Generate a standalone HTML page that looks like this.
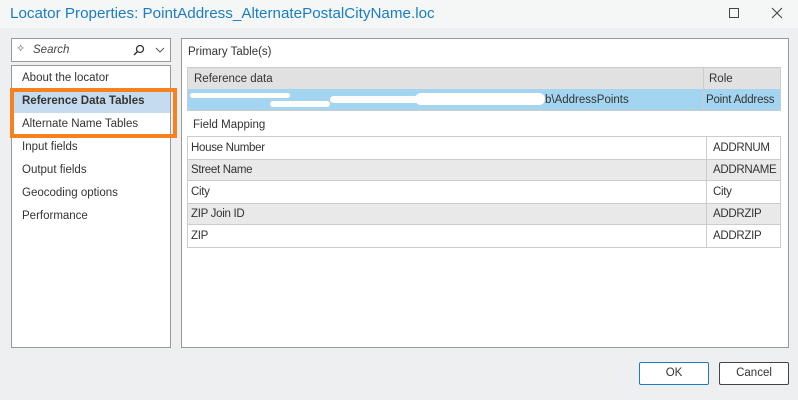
<!DOCTYPE html>
<html><head><style>
*{box-sizing:border-box;margin:0;padding:0}
body{width:798px;height:400px;overflow:hidden;background:#eeeff1;font-family:"Liberation Sans",sans-serif;font-size:11.5px;color:#333;position:relative}
.abs{position:absolute}
.title{left:0;top:0;width:798px;height:28px;background:#f5f7f7}
.title span{position:absolute;left:10px;top:5px;font-size:15.2px;color:#1a7dc4}
.cell{position:absolute;white-space:nowrap}
</style></head><body>
<div class="abs title"><span>Locator Properties: PointAddress_AlternatePostalCityName.loc</span>
<div class="abs" style="left:729px;top:8px;width:10px;height:10px;border:1px solid #444"></div>
<svg class="abs" style="left:771px;top:7px" width="12" height="12"><path d="M1 1L11 11M11 1L1 11" stroke="#444" stroke-width="1.1"/></svg>
</div>
<div class="abs" style="left:11px;top:38px;width:160px;height:24px;background:#fff;border:1px solid #999">
<span class="abs" style="left:4px;top:3px;font-size:11px;color:#666">✧</span>
<span class="abs" style="left:21px;top:5px;font-style:italic;color:#444">Search</span>
<svg class="abs" style="left:121px;top:5px" width="12" height="12"><circle cx="7" cy="5" r="3.5" fill="none" stroke="#333" stroke-width="1.3"/><path d="M4.5 7.5L1 11" stroke="#333" stroke-width="1.5"/></svg>
<svg class="abs" style="left:143px;top:8px" width="10" height="6"><path d="M1 1L5 5L9 1" fill="none" stroke="#555"/></svg>
</div>
<div class="abs" style="left:11px;top:65px;width:160px;height:283px;background:#fff;border:1px solid #999"></div>
<div class="abs" style="left:12px;top:91px;width:158px;height:22px;background:#c5dcf0"></div>
<div class="cell" style="left:22px;top:72px">About the locator</div>
<div class="cell" style="left:22px;top:95px;font-weight:bold">Reference Data Tables</div>
<div class="cell" style="left:22px;top:118px">Alternate Name Tables</div>
<div class="cell" style="left:22px;top:141px">Input fields</div>
<div class="cell" style="left:22px;top:164px">Output fields</div>
<div class="cell" style="left:22px;top:187px">Geocoding options</div>
<div class="cell" style="left:22px;top:210px">Performance</div>
<div class="abs" style="left:10px;top:88px;width:167px;height:50px;border:4px solid #f5821f"></div>
<div class="abs" style="left:181px;top:38px;width:608px;height:310px;background:#fff;border:1px solid #999"></div>
<div class="cell" style="left:188px;top:46px">Primary Table(s)</div>
<div class="abs" style="left:187px;top:67px;width:594px;height:44px;border:1px solid #ccc;background:#e1e1e1"></div>
<div class="abs" style="left:188px;top:89px;width:592px;height:21px;background:#a3d5f0"></div>
<div class="abs" style="left:703px;top:68px;width:1px;height:42px;background:#ccc"></div>
<div class="abs" style="left:190px;top:93px;width:100px;height:5px;background:#fff;border-radius:3px"></div>
<div class="abs" style="left:270px;top:101px;width:60px;height:6px;background:#fff;border-radius:3px"></div>
<div class="abs" style="left:330px;top:96px;width:200px;height:7px;background:#fff;border-radius:4px"></div>
<div class="abs" style="left:415px;top:93px;width:130px;height:12px;background:#fff;border-radius:6px"></div>
<div class="cell" style="left:194px;top:73px">Reference data</div>
<div class="cell" style="left:709px;top:73px">Role</div>
<div class="cell" style="left:545px;top:94px">b\AddressPoints</div>
<div class="cell" style="left:706px;top:94px;letter-spacing:-0.2px">Point Address</div>
<div class="cell" style="left:193px;top:119px">Field Mapping</div>
<div class="abs" style="left:187px;top:136px;width:594px;height:112px;border:1px solid #ccc;background:#fff"></div>
<div class="abs" style="left:188px;top:159px;width:592px;height:22px;background:#e9e9e9;border-top:1px solid #ccc;border-bottom:1px solid #ccc"></div>
<div class="abs" style="left:188px;top:203px;width:592px;height:22px;background:#e9e9e9;border-top:1px solid #ccc;border-bottom:1px solid #ccc"></div>
<div class="abs" style="left:706px;top:137px;width:1px;height:110px;background:#ccc"></div>
<div style="letter-spacing:-0.3px">
<div class="cell" style="left:191px;top:142px">House Number</div><div class="cell" style="left:713px;top:142px">ADDRNUM</div>
<div class="cell" style="left:191px;top:164px">Street Name</div><div class="cell" style="left:713px;top:164px">ADDRNAME</div>
<div class="cell" style="left:191px;top:186px">City</div><div class="cell" style="left:713px;top:186px">City</div>
<div class="cell" style="left:191px;top:208px">ZIP Join ID</div><div class="cell" style="left:713px;top:208px">ADDRZIP</div>
<div class="cell" style="left:191px;top:230px">ZIP</div><div class="cell" style="left:713px;top:230px">ADDRZIP</div>
</div>
<div class="abs" style="left:639px;top:362px;width:70px;height:23px;background:#fff;border:1px solid #1a7dc4;border-radius:2px;text-align:center;line-height:21px">OK</div>
<div class="abs" style="left:719px;top:362px;width:70px;height:23px;background:#fff;border:1px solid #444;border-radius:2px;text-align:center;line-height:21px">Cancel</div>
</body></html>
